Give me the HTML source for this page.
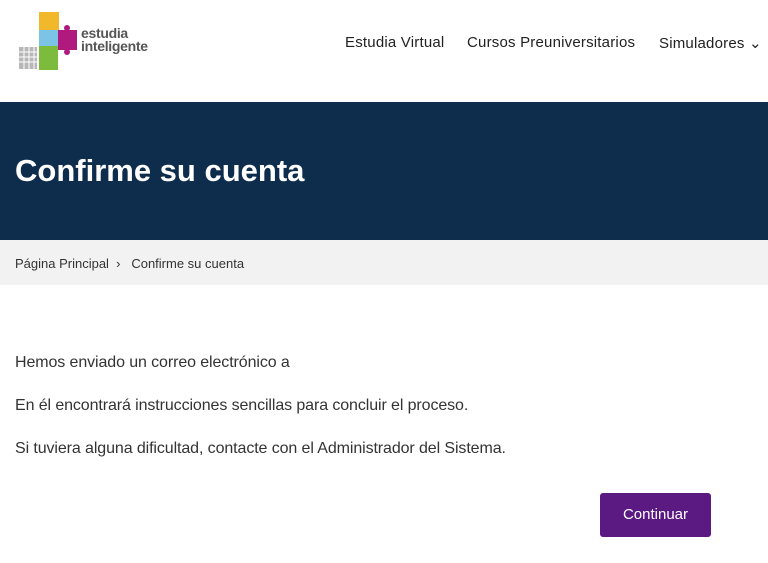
<!DOCTYPE html>
<html><head><meta charset="utf-8"><style>
*{margin:0;padding:0;box-sizing:border-box}
body{width:768px;height:563px;overflow:hidden;background:#fff;font-family:"Liberation Sans",sans-serif;color:#333}
.hdr{height:102px;position:relative}
.nav{position:absolute;top:34px;left:0;font-size:15px;color:#222;letter-spacing:0.2px}
.nav span{position:absolute;white-space:nowrap;top:0}
.banner{background:#0e2d4c;height:138px;position:relative}
.bc{background:#f2f2f2;height:45px;font-size:13px;color:#333;padding:16px 0 0 15px}
p{position:absolute;left:15px;font-size:16px;color:#333;letter-spacing:-0.1px}
.btn{position:absolute;left:600px;top:493px;width:111px;height:44px;background:#5a1a82;border-radius:3px;color:#fff;font-size:15px;text-align:center;line-height:44px}
</style></head><body>
<div class="hdr">
<svg width="80" height="80" style="position:absolute;left:0;top:0">
<rect x="39" y="12" width="20" height="19" fill="#f2b82b"/>
<rect x="39" y="30" width="20" height="17" fill="#7cc3e8"/>
<rect x="39" y="46" width="19" height="24" fill="#7dbb3d"/>
<rect x="58" y="30" width="19" height="20" fill="#b0197d"/>
<circle cx="67" cy="28" r="3" fill="#b0197d"/><circle cx="67" cy="52" r="3" fill="#b0197d"/>
<g fill="#999"><rect x="19" y="47" width="18" height="22" opacity=".7"/></g>
<g stroke="#fff" stroke-width="1"><line x1="19" y1="52" x2="37" y2="52"/><line x1="19" y1="57" x2="37" y2="57"/><line x1="19" y1="62" x2="37" y2="62"/><line x1="24" y1="47" x2="24" y2="69"/><line x1="29" y1="47" x2="29" y2="69"/><line x1="34" y1="47" x2="34" y2="69"/></g>
</svg>
<div style="position:absolute;left:81px;top:27px;font-size:14px;line-height:13px;color:#555;font-weight:bold;letter-spacing:-0.3px">estudia<br>inteligente</div>
<div class="nav"><span style="left:345px">Estudia Virtual</span><span style="left:467px">Cursos Preuniversitarios</span><span style="left:659px">Simuladores ⌄</span></div>
</div>
<div class="banner"><div style="position:absolute;left:15px;top:51px;color:#fff;font-size:31px;font-weight:bold">Confirme su cuenta</div></div>
<div class="bc">Página Principal &nbsp;›&nbsp;&nbsp; Confirme su cuenta</div>
<p style="top:354px">Hemos enviado un correo electrónico a</p>
<p style="top:397px">En él encontrará instrucciones sencillas para concluir el proceso.</p>
<p style="top:440px">Si tuviera alguna dificultad, contacte con el Administrador del Sistema.</p>
<div class="btn">Continuar</div>
</body></html>
